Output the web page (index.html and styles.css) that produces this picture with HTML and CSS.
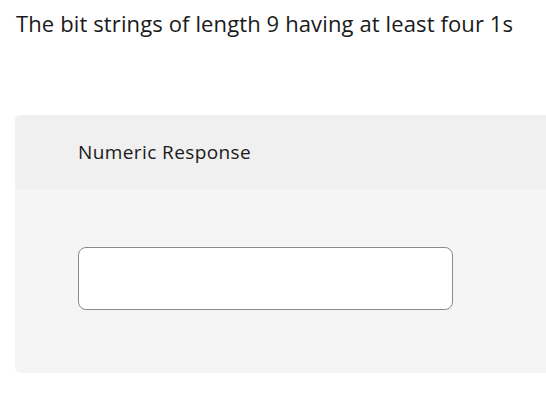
FILE: index.html
```html
<!DOCTYPE html>
<html lang="en">
<head>
    <meta charset="UTF-8">
    <meta name="viewport" content="width=device-width, initial-scale=1.0">
    <title>Question</title>
    <link rel="stylesheet" href="styles.css">
</head>
<body>

    <!-- Question text -->
    <div class="question">The bit strings of length 9 having at least four 1s</div>

    <!-- Response card -->
    <div class="response-card">
        <div class="card-header">Numeric Response</div>
        <div class="card-body">
            <input type="text" class="answer-input">
        </div>
    </div>

</body>
</html>
```

FILE: styles.css
```css
body, html {
    margin: 0;
    padding: 0;
    height: 100%;
    font-family: "Open Sans", Lato, sans-serif;
    background-color: #ffffff;
    color: #1a1a1a;
    overflow: hidden;
}

/* Question */
.question {
    font-size: 22px;
    letter-spacing: 0.12px;
    line-height: 26px;
    padding: 10px 0 0 16px;
    height: 115px;
    box-sizing: border-box;
    white-space: nowrap;
}

/* Response card */
.response-card {
    margin-left: 15px;
    width: 560px;
    border-radius: 5px;
    overflow: hidden;
    background-color: #f5f5f5;
}

.card-header {
    background-color: #f0f0f0;
    height: 74px;
    display: flex;
    align-items: center;
    padding-left: 63px;
    font-size: 19px;
    letter-spacing: 0.4px;
}

.card-body {
    height: 184px;
    padding: 58px 0 0 63px;
    box-sizing: border-box;
}

.answer-input {
    display: block;
    width: 375px;
    height: 63px;
    box-sizing: border-box;
    border: 1px solid #8a8a8a;
    border-radius: 8px;
    background-color: #ffffff;
    outline: none;
}
```
